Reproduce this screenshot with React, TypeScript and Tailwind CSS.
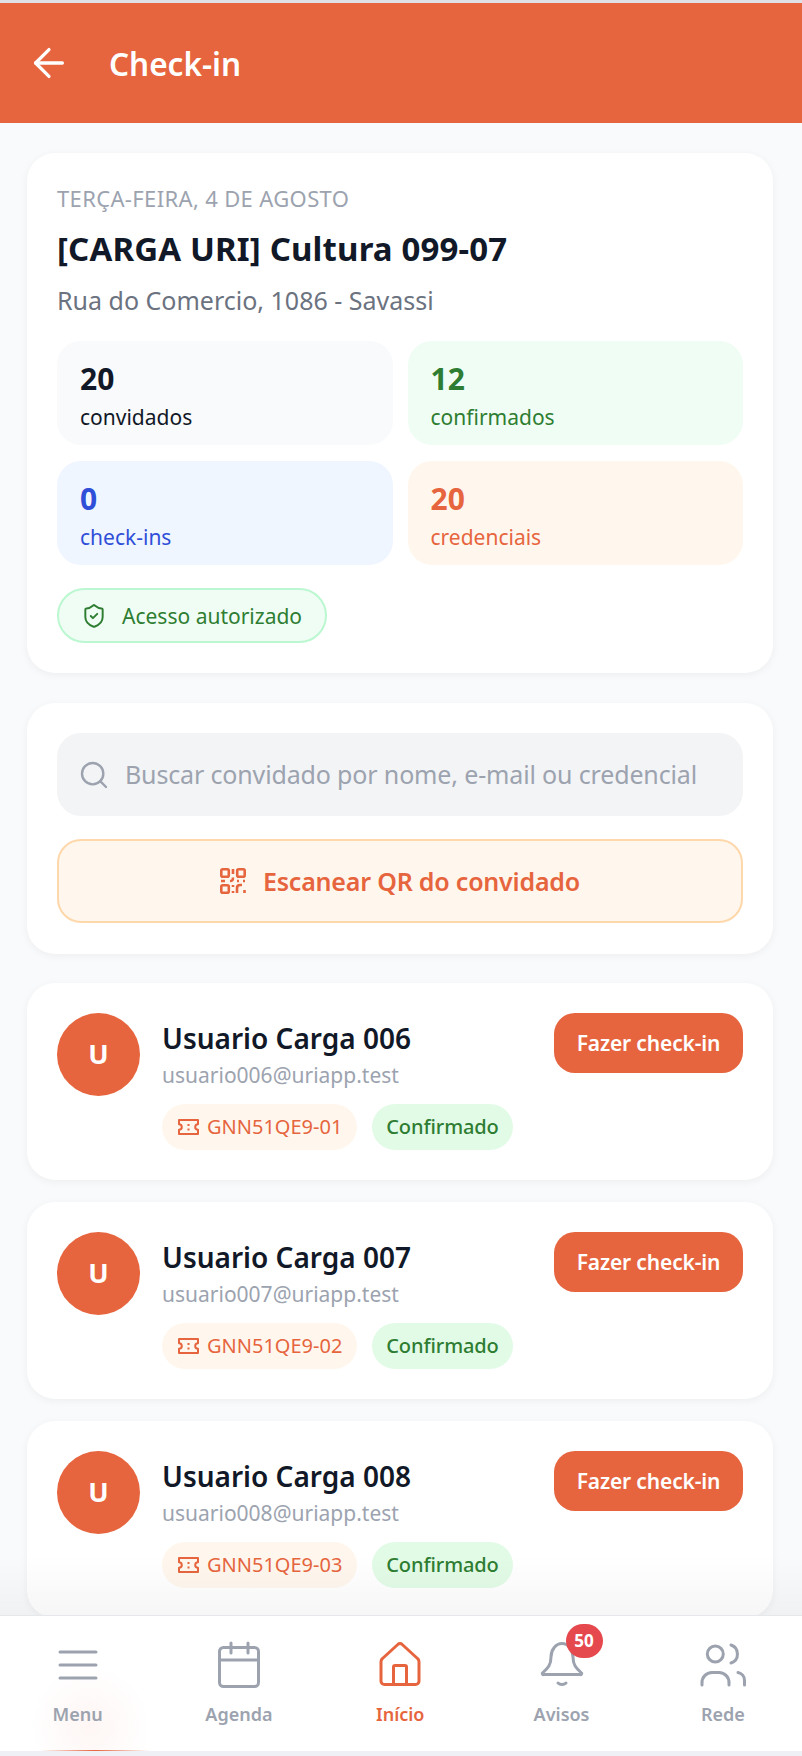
import { ArrowLeft, Search, ShieldCheck } from 'lucide-react';

const FONT = "font-['Noto_Sans','Open_Sans',sans-serif]";

const STATS = [
  { value: '20', label: 'convidados', box: 'bg-[#F9FAFB]', num: 'text-[#111827]', text: 'text-[#111827]' },
  { value: '12', label: 'confirmados', box: 'bg-[#F0FDF4]', num: 'text-[#2E7D32]', text: 'text-[#2E7D32]' },
  { value: '0', label: 'check-ins', box: 'bg-[#EFF6FF]', num: 'text-[#2F4FD8]', text: 'text-[#2F4FD8]' },
  { value: '20', label: 'credenciais', box: 'bg-[#FFF7ED]', num: 'text-[#E6653E]', text: 'text-[#E6653E]' },
];

const GUESTS = [
  { name: 'Usuario Carga 006', email: 'usuario006@uriapp.test', code: 'GNN51QE9-01' },
  { name: 'Usuario Carga 007', email: 'usuario007@uriapp.test', code: 'GNN51QE9-02' },
  { name: 'Usuario Carga 008', email: 'usuario008@uriapp.test', code: 'GNN51QE9-03' },
];

function QrIcon() {
  return (
    <svg width="26" height="26" viewBox="0 0 26 26" fill="none" stroke="#E6653E" strokeWidth="2.600">
      <rect x="1.300" y="1.300" width="7.500" height="7.500" rx="1.500" />
      <rect x="17.200" y="1.300" width="7.500" height="7.500" rx="1.500" />
      <rect x="1.300" y="17.200" width="7.500" height="7.500" rx="1.500" />
      <path d="M13 1v5M13 9.500c0 3-1 3.500-3 3.500M1 13h4M17 13h2M23 13h2M13 17v2M13 23v2M17 25v-5c0-2 1-3 3-3h2M24.500 22v3" />
    </svg>
  );
}

function TicketIcon() {
  return (
    <svg width="21" height="16" viewBox="0 0 21 16" fill="none" stroke="#E6653E" strokeWidth="2" strokeLinejoin="round">
      <path d="M1 1h19v4.200a2.800 2.800 0 0 0 0 5.600V15H1v-4.200a2.800 2.800 0 0 0 0-5.600z" />
      <path d="M10.500 5v2M10.500 9.500v2" />
    </svg>
  );
}

function MenuGlyph() {
  return (
    <svg width="48" height="48" viewBox="0 0 48 48" fill="none" stroke="#9CA3AF" strokeWidth="3" strokeLinecap="round" className="overflow-visible">
      <path d="M6 14h36M6 27h36M6 40h36" />
    </svg>
  );
}

function CalendarGlyph() {
  return (
    <svg width="48" height="48" viewBox="0 0 48 48" fill="none" stroke="#9CA3AF" strokeWidth="3" strokeLinecap="round" className="overflow-visible">
      <rect x="4.500" y="9.500" width="39" height="39" rx="4" />
      <path d="M4.500 22h39M16 5v10M33 5v10" />
    </svg>
  );
}

function HomeGlyph() {
  return (
    <svg width="48" height="48" viewBox="0 0 48 48" fill="none" stroke="#E6653E" strokeWidth="3" strokeLinejoin="round" className="overflow-visible">
      <path d="M21.800 6.500a3 3 0 0 1 4.400 0L41.500 20.500a4 4 0 0 1 1.500 3.200V43a3.500 3.500 0 0 1-3.500 3.500h-31A3.500 3.500 0 0 1 5 43V23.700a4 4 0 0 1 1.500-3.200z" />
      <path d="M17.500 46.500V29a1.500 1.500 0 0 1 1.500-1.500h10a1.500 1.500 0 0 1 1.500 1.500v17.500" />
    </svg>
  );
}

function BellGlyph() {
  return (
    <svg width="48" height="48" viewBox="0 0 48 48" fill="none" stroke="#9CA3AF" strokeWidth="3" strokeLinecap="round" strokeLinejoin="round" className="overflow-visible">
      <path d="M13 19a11 13.500 0 0 1 22 0c0 8 3 11 8 15.500a1 1 0 0 1-1 2H6a1 1 0 0 1-1-2c5-4.500 8-7.500 8-15.500z" />
      <path d="M20 45c2 2 6 2 8 0" />
    </svg>
  );
}

function UsersGlyph() {
  return (
    <svg width="48" height="48" viewBox="0 0 48 48" fill="none" stroke="#9CA3AF" strokeWidth="3" strokeLinecap="round" className="overflow-visible">
      <circle cx="16.300" cy="16" r="8" />
      <path d="M32 7a9.500 9.500 0 0 1 0 18M3 47v-2a10 10 0 0 1 10-10.500h7a10 10 0 0 1 10 10.500v2M39 34.500a8 8 0 0 1 6.500 8V47" />
    </svg>
  );
}

const NAV_ITEMS = [
  { label: 'Menu', icon: <MenuGlyph /> },
  { label: 'Agenda', icon: <CalendarGlyph /> },
  { label: 'Início', icon: <HomeGlyph />, active: true },
  { label: 'Avisos', icon: <BellGlyph />, badge: '50' },
  { label: 'Rede', icon: <UsersGlyph /> },
];

function GuestCard({ name, email, code }: { name: string; email: string; code: string }) {
  return (
    <div className="flex h-[197px] items-start rounded-[28px] bg-white p-[30px] shadow-[0_2px_8px_rgba(0,0,0,0.05)]">
      <div className="flex h-[83px] w-[83px] shrink-0 items-center justify-center rounded-full bg-[#E6653E] text-[27px] font-bold text-white">
        U
      </div>
      <div className="ml-[22px] min-w-0 flex-1">
        <p className="mt-[7px] text-[28px] leading-[36px] font-semibold text-[#111827]">{name}</p>
        <p className="mt-[5px] text-[21px] leading-[28px] text-[#9CA3AF]">{email}</p>
        <div className="mt-[15px] flex gap-[15px]">
          <span className="flex h-[46px] w-[195px] items-center gap-[8px] rounded-full bg-[#FFF7ED] pl-[16px] text-[20px] text-[#E6653E]">
            <TicketIcon />
            {code}
          </span>
          <span className="flex h-[46px] w-[141px] items-center justify-center rounded-full bg-[#E2FBE6] text-[20px] font-medium tracking-[-0.1px] text-[#2E7D32]">
            Confirmado
          </span>
        </div>
      </div>
      <button
        type="button"
        className="flex h-[60px] w-[189px] shrink-0 items-center justify-center rounded-[21px] bg-[#E6653E] pt-[1px] text-[21px] font-semibold tracking-[-0.15px] text-white"
      >
        Fazer check-in
      </button>
    </div>
  );
}

export default function App() {
  return (
    <div className={`relative h-[1756px] overflow-hidden border-t-[3px] border-[#DFE1E6] bg-[#F9FAFB] ${FONT}`}>
      <header className="flex h-[120px] items-center bg-[#E6653E] pl-[26px] text-white">
        <ArrowLeft size={46} strokeWidth={1.7} />
        <h1 className="ml-[37px] pt-[2px] text-[31.500px] font-semibold">Check-in</h1>
      </header>

      <main className="flex flex-col pt-[30px] pr-[29px] pl-[27px]">
        <section className="h-[520px] rounded-[28px] bg-white p-[30px] shadow-[0_2px_8px_rgba(0,0,0,0.05)]">
          <p className="text-[22px] leading-[30px] tracking-[0.35px] text-[#9CA3AF]">TERÇA-FEIRA, 4 DE AGOSTO</p>
          <h2 className="mt-[14px] text-[33px] leading-[44px] font-bold tracking-[0.15px] text-[#111827]">[CARGA URI] Cultura 099-07</h2>
          <p className="mt-[13px] text-[25px] leading-[32px] text-[#6B7280]">Rua do Comercio, 1086 - Savassi</p>
          <div className="mt-[25px] grid grid-cols-2 gap-x-[15px] gap-y-[16px]">
            {STATS.map((stat) => (
              <div key={stat.label} className={`h-[104px] rounded-[24px] pl-[23px] ${stat.box}`}>
                <p className={`pt-[20px] text-[30px] leading-[36px] font-bold ${stat.num}`}>{stat.value}</p>
                <p className={`mt-[6px] text-[21px] leading-[28px] ${stat.text}`}>{stat.label}</p>
              </div>
            ))}
          </div>
          <div className="mt-[23px] flex h-[55px] w-[270px] items-center gap-[15px] rounded-full border-2 border-[#BBF7D0] bg-[#F0FDF4] pl-[22px] text-[21px] text-[#2E7D32]">
            <ShieldCheck size={26} strokeWidth={1.8} />
            <span className="pt-[2px]">Acesso autorizado</span>
          </div>
        </section>

        <section className="mt-[30px] h-[251px] rounded-[28px] bg-white p-[30px] shadow-[0_2px_8px_rgba(0,0,0,0.05)]">
          <div className="flex h-[83px] items-center gap-[15px] rounded-[24px] bg-[#F3F4F6] pl-[21px] text-[25px] tracking-[-0.15px] text-[#9CA3AF]">
            <Search size={32} strokeWidth={1.8} />
            <span className="pt-[1px]">Buscar convidado por nome, e-mail ou credencial</span>
          </div>
          <button
            type="button"
            className="mt-[23px] flex h-[84px] w-full items-center justify-center gap-[17px] rounded-[24px] border-2 border-[#FED7AA] bg-[#FFF7ED] text-[25px] font-semibold tracking-[-0.2px] text-[#E6653E]"
          >
            <QrIcon />
            <span className="pt-[1px]">Escanear QR do convidado</span>
          </button>
        </section>

        <div className="mt-[29px] flex flex-col gap-[22px]">
          {GUESTS.map((guest) => (
            <GuestCard key={guest.code} {...guest} />
          ))}
        </div>
      </main>

      <div className="pointer-events-none absolute right-0 bottom-[141px] left-0 h-[60px] bg-gradient-to-b from-transparent to-black/[0.035]" />

      <nav className="absolute right-0 bottom-[5px] left-0 h-[136px] overflow-hidden border-t border-[#E5E7EB] bg-white bg-[radial-gradient(circle_at_90px_110px,rgba(230,101,62,0.06),transparent_60px)]">
        <div className="-ml-[3px] grid grid-cols-[repeat(5,161.300px)] pt-[22px]">
          {NAV_ITEMS.map((item) => (
            <div key={item.label} className="flex flex-col items-center">
              <span className="relative h-[48px] w-[48px]">
                {item.icon}
                {item.badge ? (
                  <span className="absolute -top-[14px] -right-[17px] flex h-[34px] w-[37px] items-center justify-center rounded-full bg-[#E5484D] text-[17px] font-bold text-white">
                    {item.badge}
                  </span>
                ) : null}
              </span>
              <span className={`mt-[15px] text-[18px] leading-[26px] font-semibold ${item.active ? 'text-[#E6653E]' : 'text-[#9CA3AF]'}`}>
                {item.label}
              </span>
            </div>
          ))}
        </div>
        <div className="absolute bottom-0 left-[40px] h-px w-[110px] bg-gradient-to-r from-transparent via-[#E6653E] to-transparent" />
      </nav>
      <div className="absolute right-0 bottom-0 left-0 h-[5px] bg-[#EEF0F6]" />
    </div>
  );
}
